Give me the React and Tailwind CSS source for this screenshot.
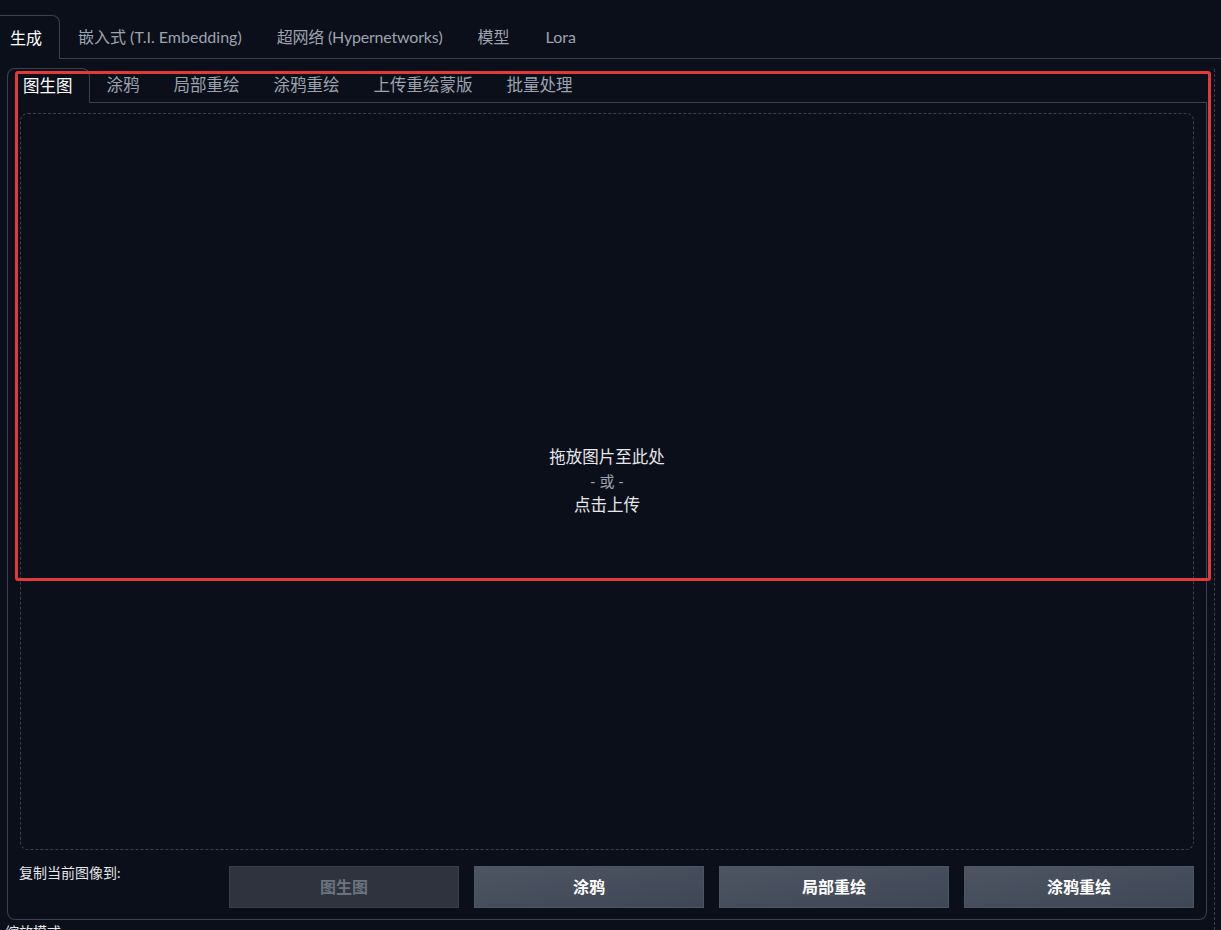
import React from "react";

const font = { fontFamily: '"Lato", "Noto Sans CJK SC", sans-serif' };

export default function App() {
  const topTabs = [
    { t: "嵌入式 (T.I. Embedding)", c: "h-[43px] pl-[18px] pr-[18px] text-[16px] text-[#9ca3af] leading-none" },
    { t: "超网络 (Hypernetworks)", c: "h-[43px] pl-[17px] pr-[18px] text-[16px] tracking-[-0.2px] text-[#9ca3af] leading-none" },
    { t: "模型", c: "h-[43px] pl-[17px] pr-[18px] text-[16px] text-[#9ca3af] leading-none" },
    { t: "Lora", c: "h-[43px] px-[18px] text-[16px] text-[#9ca3af] leading-none" },
  ];
  const subTabs = ["涂鸦", "局部重绘", "涂鸦重绘", "上传重绘蒙版", "批量处理"];
  return (
    <div className="relative w-[1221px] h-[930px] overflow-hidden bg-[#0b0f19] text-white" style={font}>
      {/* top tab nav */}
      <div className="flex pt-[15px] ml-[-7px] border-b border-[#374151] h-[59px]">
        <button className="h-[44px] pl-[16px] pr-[17px] text-[16px] text-white border border-[#374151] border-b-0 rounded-t-[8px] bg-[#0b0f19] mb-[-1px] leading-none">生成</button>
        {topTabs.map((x) => (
          <button key={x.t} className={x.c}>
            {x.t}
          </button>
        ))}
      </div>

      {/* sub tabs */}
      <div className="ml-[7px] mr-[14px] mt-[9px]">
        <div className="flex border-b border-[#374151] h-[35px]">
          <button className="h-[35px] pl-[15px] pr-[16px] text-[16.5px] text-white border border-[#374151] border-b-0 rounded-t-[8px] bg-[#0b0f19] mb-[-1px] leading-none">图生图</button>
          {subTabs.map((t) => (
            <button key={t} className="h-[34px] px-[17px] text-[16.5px] text-[#9ca3af] leading-none">{t}</button>
          ))}
        </div>
        <div className="border border-t-0 border-[#374151] rounded-b-[8px] px-[12px] pt-[10px] pb-[11px]">
          <div className="h-[737px] border border-dashed border-[#374151] rounded-[8px] flex flex-col items-center justify-center text-[16.5px] leading-[24px] pb-[2px]">
            <div className="text-[#e5e7eb]">拖放图片至此处</div>
            <div className="text-[#9ca3af] text-[15px]">- 或 -</div>
            <div className="text-[#e5e7eb]">点击上传</div>
          </div>
          <div className="flex gap-[15px] mt-[16px]">
            <div className="w-[195px] text-[14px] text-[#e5e7eb] mt-[-3px] ml-[-1px] leading-[20px]">复制当前图像到:</div>
            <button className="flex-1 h-[42px] bg-[#2e333d] border border-[#3a3f49] text-[#6b7280] font-bold text-[16px]">图生图</button>
            <button className="flex-1 h-[42px] bg-gradient-to-br from-[#4d5563] to-[#3f4756] border border-[#4b5563] text-white font-bold text-[16px]">涂鸦</button>
            <button className="flex-1 h-[42px] bg-gradient-to-br from-[#4d5563] to-[#3f4756] border border-[#4b5563] text-white font-bold text-[16px]">局部重绘</button>
            <button className="flex-1 h-[42px] bg-gradient-to-br from-[#4d5563] to-[#3f4756] border border-[#4b5563] text-white font-bold text-[16px]">涂鸦重绘</button>
          </div>
        </div>
        <div className="text-[14px] text-[#e5e7eb] ml-[-2px] mt-[2px] leading-[20px]">缩放模式</div>
      </div>

      {/* right dashed column edge */}
      <div className="absolute left-[1214px] top-[69px] bottom-0 border-l border-dashed border-[#374151]" />

      {/* red highlight overlay */}
      <div className="absolute left-[15px] top-[71px] w-[1196px] h-[510px] border-[3px] border-[#e5383b] rounded-[3px] pointer-events-none" />
    </div>
  );
}
